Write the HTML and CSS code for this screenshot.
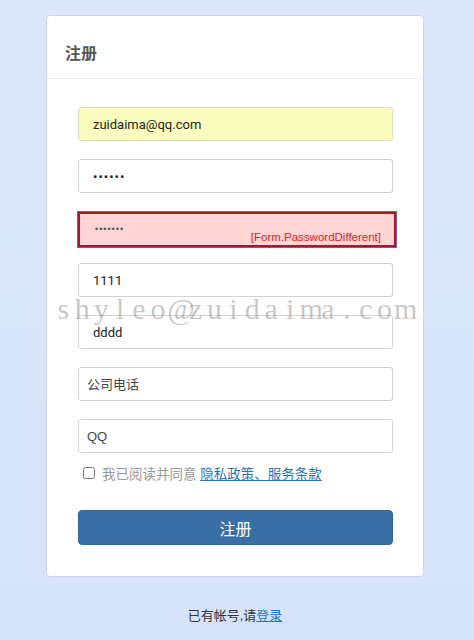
FILE: index.html
```html
<!DOCTYPE html>
<html lang="zh-CN">
<head>
    <meta charset="UTF-8">
    <meta name="viewport" content="width=device-width, initial-scale=1.0">
    <title>注册</title>
    <link rel="stylesheet" href="styles.css">
</head>
<body>
    <div class="panel">
        <div class="panel-heading">
            <h3>注册</h3>
        </div>
        <form class="panel-body">
            <input class="form-control autofill" type="text" value="zuidaima@qq.com">
            <input class="form-control" type="password" value="123456">
            <div class="error-box">
                <input class="error-input" type="password" value="1234567">
                <span class="error-tip">[Form.PasswordDifferent]</span>
            </div>
            <input class="form-control" type="text" value="1111">
            <input class="form-control" type="text" value="dddd">
            <input class="form-control hint" type="text" placeholder="公司电话">
            <input class="form-control hint" type="text" placeholder="QQ">
            <label class="agree">
                <input type="checkbox">
                <span>我已阅读并同意 <a href="#">隐私政策、服务条款</a></span>
            </label>
            <button class="btn-primary" type="button">注册</button>
        </form>
    </div>

    <p class="footer">已有帐号,请<a href="#">登录</a></p>

    <!-- watermark from the original screenshot, one fixed cell per letter -->
    <div class="watermark"><span>s</span><span>h</span><span>y</span><span>l</span><span>e</span><span>o</span><span>@</span><span>z</span><span>u</span><span>i</span><span>d</span><span>a</span><span>i</span><span>m</span><span>a</span><span>.</span><span>c</span><span>o</span><span>m</span></div>
</body>
</html>
```

FILE: styles.css
```css
body {
    margin: 0;
    background: linear-gradient(#dce7fb, #d6e3fb);
    font-family: "Liberation Sans", Arial, "Noto Sans CJK SC", sans-serif;
    font-size: 14px;
    color: #333;
    min-height: 640px;
    position: relative;
}
.panel {
    width: 376px;
    margin: 15px 0 0 46px;
    background: #fff;
    border: 1px solid #cdd7e8;
    border-radius: 4px;
}
.panel-heading {
    padding: 27px 18px 13px;
    border-bottom: 1px solid #eceef2;
}
.panel-heading h3 {
    margin: 0;
    font-size: 16px;
    line-height: 22px;
    font-weight: bold;
    color: #555;
}
.panel-body {
    display: flex;
    flex-direction: column;
    padding: 28px 30px 31px 31px;
}
.form-control {
    box-sizing: border-box;
    width: 315px;
    height: 34px;
    margin: 0 0 18px;
    padding: 0 14px;
    border: 1px solid #d4d4d4;
    border-radius: 3px;
    background: #fff;
    font-family: Roboto, "Noto Sans CJK SC", sans-serif;
    font-size: 13px;
    color: #222;
    outline: none;
}
.form-control.autofill {
    background: #fafdbe;
    border-color: #dedcc0;
}
.form-control.hint {
    padding-left: 8px;
    font-family: "Liberation Sans", "Noto Sans CJK SC", sans-serif;
    font-size: 13px;
}
.form-control.hint::placeholder {
    color: #444;
}
input[type="password"] {
    letter-spacing: 1px;
}
.error-box {
    position: relative;
    box-sizing: border-box;
    width: 320px;
    height: 37px;
    margin: 0 0 15px -1px;
    border: 1px solid #6f63a8;
    box-shadow: inset 0 0 0 2px #b5102c;
    background: #ffd4d4;
}
.error-input {
    box-sizing: border-box;
    width: 100%;
    height: 34px;
    padding: 0 17px;
    border: none;
    background: transparent;
    font-size: 9px;
    color: #555;
    outline: none;
}
.error-tip {
    position: absolute;
    right: 15px;
    bottom: 4px;
    font-size: 11.5px;
    color: #d8242a;
}
.agree {
    display: flex;
    align-items: center;
    height: 18px;
    margin: -7px 0 28px;
    color: #999;
    font-size: 13.5px;
}
.agree input {
    width: 12px;
    height: 12px;
    margin: 0 7px 0 5px;
}
.agree a {
    color: #2b73b0;
}
.btn-primary {
    height: 35px;
    border: 1px solid #33659b;
    border-radius: 4px;
    background: #3a6fa6;
    color: #fff;
    font-family: inherit;
    font-size: 16px;
    cursor: pointer;
}
.footer {
    width: 378px;
    margin: 28px 0 0 46px;
    text-align: center;
    font-size: 13px;
    color: #333;
}
.footer a {
    color: #2b73b0;
}
.watermark {
    position: absolute;
    top: 294px;
    left: 54px;
    display: flex;
    font-family: "Liberation Serif", "Times New Roman", serif;
    font-size: 30px;
    line-height: 1;
    color: rgba(130, 130, 130, 0.45);
    pointer-events: none;
    white-space: nowrap;
}
.watermark span {
    width: 18.9px;
    text-align: center;
}
```
